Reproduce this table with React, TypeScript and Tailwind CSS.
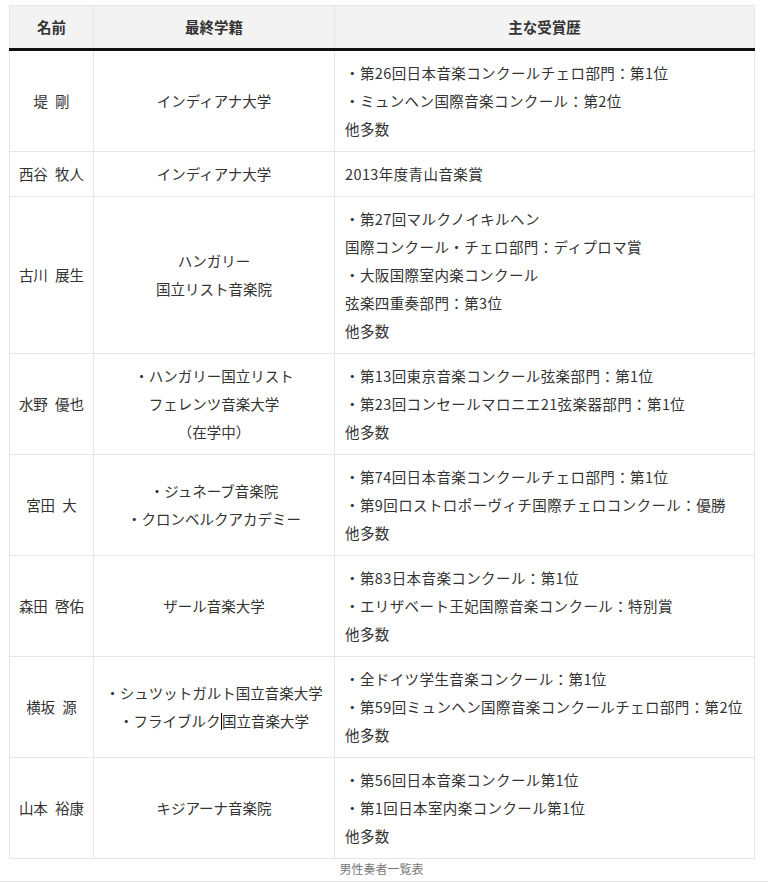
import React from "react";

type Row = {
  name: string;
  school: React.ReactNode[];
  awards: string[];
};

const Caret = () => (
  <span className="inline-block w-[1.5px] h-[17px] bg-black align-[-3px]" />
);

const rows: Row[] = [
  {
    name: "堤\u2002剛",
    school: ["インディアナ大学"],
    awards: ["・第26回日本音楽コンクールチェロ部門：第1位", "・ミュンヘン国際音楽コンクール：第2位", "他多数"],
  },
  {
    name: "西谷\u2002牧人",
    school: ["インディアナ大学"],
    awards: ["2013年度青山音楽賞"],
  },
  {
    name: "古川\u2002展生",
    school: ["ハンガリー", "国立リスト音楽院"],
    awards: [
      "・第27回マルクノイキルヘン",
      "国際コンクール・チェロ部門：ディプロマ賞",
      "・大阪国際室内楽コンクール",
      "弦楽四重奏部門：第3位",
      "他多数",
    ],
  },
  {
    name: "水野\u2002優也",
    school: ["・ハンガリー国立リスト", "フェレンツ音楽大学", "（在学中）"],
    awards: ["・第13回東京音楽コンクール弦楽部門：第1位", "・第23回コンセールマロニエ21弦楽器部門：第1位", "他多数"],
  },
  {
    name: "宮田\u2002大",
    school: ["・ジュネーブ音楽院", "・クロンベルクアカデミー"],
    awards: ["・第74回日本音楽コンクールチェロ部門：第1位", "・第9回ロストロポーヴィチ国際チェロコンクール：優勝", "他多数"],
  },
  {
    name: "森田\u2002啓佑",
    school: ["ザール音楽大学"],
    awards: ["・第83日本音楽コンクール：第1位", "・エリザベート王妃国際音楽コンクール：特別賞", "他多数"],
  },
  {
    name: "横坂\u2002源",
    school: [
      "・シュツットガルト国立音楽大学",
      <span key="f">
        ・フライブルク
        <Caret />
        国立音楽大学
      </span>,
    ],
    awards: ["・全ドイツ学生音楽コンクール：第1位", "・第59回ミュンヘン国際音楽コンクールチェロ部門：第2位", "他多数"],
  },
  {
    name: "山本\u2002裕康",
    school: ["キジアーナ音楽院"],
    awards: ["・第56回日本音楽コンクール第1位", "・第1回日本室内楽コンクール第1位", "他多数"],
  },
];

export default function App() {
  return (
    <div
      className="w-[768px] bg-white text-[#333] pt-[5px]"
      style={{ fontFamily: '"Noto Sans CJK JP", "Noto Sans", sans-serif' }}
    >
      <div className="border-b border-[#e6e6e6] pb-[3px]">
        <table className="ml-[9px] w-[745px] table-fixed border-collapse text-[14.5px] leading-[28px]">
          <colgroup>
            <col className="w-[84px]" />
            <col className="w-[241px]" />
            <col className="w-[420px]" />
          </colgroup>
          <thead>
            <tr className="bg-[#f3f3f3]">
              <th className="h-[44px] border border-[#e6e6e6] border-b-[3px] border-b-[#111] font-bold text-center">
                名前
              </th>
              <th className="border border-[#e6e6e6] border-b-[3px] border-b-[#111] font-bold text-center">
                最終学籍
              </th>
              <th className="border border-[#e6e6e6] border-b-[3px] border-b-[#111] font-bold text-center">
                主な受賞歴
              </th>
            </tr>
          </thead>
          <tbody>
            {rows.map((r, i) => (
              <tr key={i}>
                <td className="border border-[#e6e6e6] text-center align-middle py-[8px] px-[2px] whitespace-nowrap">{r.name}</td>
                <td className="border border-[#e6e6e6] text-center align-middle py-[8px] px-[2px] whitespace-nowrap">
                  {r.school.map((s, j) => (
                    <div key={j}>{s}</div>
                  ))}
                </td>
                <td className="border border-[#e6e6e6] text-left align-middle py-[8px] pl-[10px] pr-[2px] whitespace-nowrap tracking-[0.4px]">
                  {r.awards.map((a, j) => (
                    <div key={j}>{a}</div>
                  ))}
                </td>
              </tr>
            ))}
          </tbody>
        </table>
        <div className="ml-[9px] w-[745px] text-center text-[12px] leading-[18px] text-[#777] mt-[1px]">
          男性奏者一覧表
        </div>
      </div>
    </div>
  );
}
